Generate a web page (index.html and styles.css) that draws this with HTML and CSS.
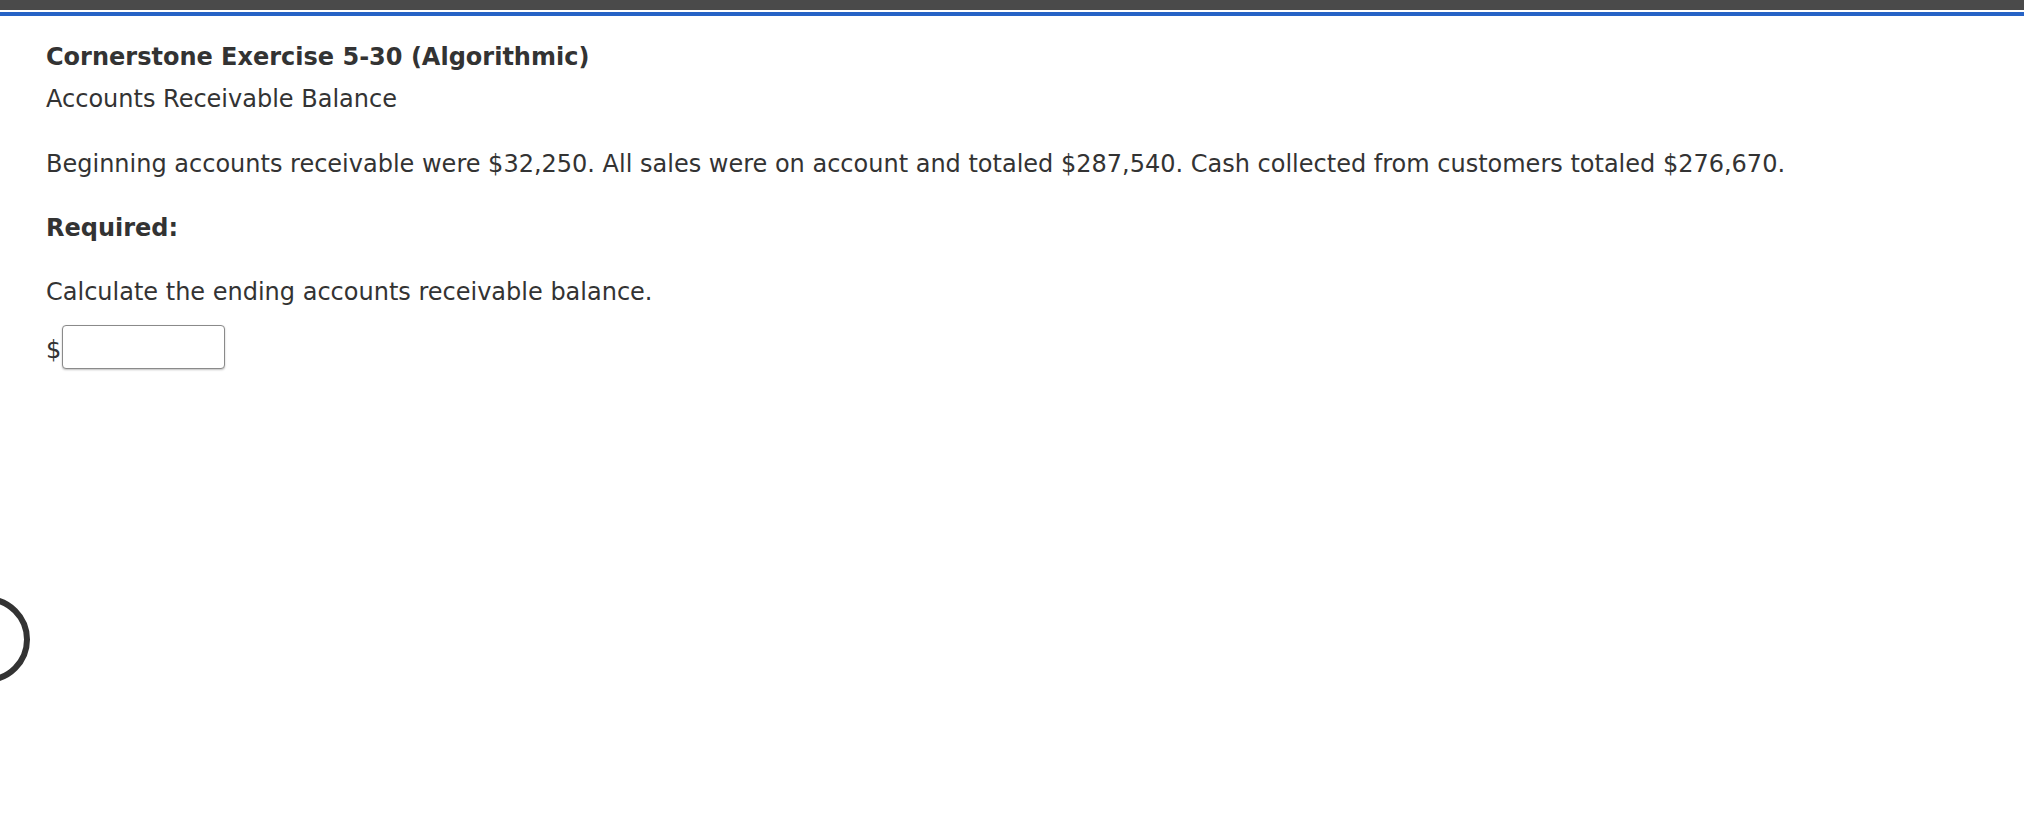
FILE: index.html
```html
<!DOCTYPE html>
<html lang="en">
<head>
<meta charset="utf-8">
<title>Cornerstone Exercise 5-30 (Algorithmic)</title>
<link rel="stylesheet" href="styles.css">
</head>
<body>
<header class="topbar">
  <div class="topbar-dark"></div>
  <div class="topbar-blue"></div>
</header>
<main class="content">
  <h1 class="title">Cornerstone Exercise 5-30 (Algorithmic)</h1>
  <p class="subtitle">Accounts Receivable Balance</p>
  <p class="intro">Beginning accounts receivable were $32,250. All sales were on account and totaled $287,540. Cash collected from customers totaled $276,670.</p>
  <p class="required">Required:</p>
  <p class="question">Calculate the ending accounts receivable balance.</p>
  <div class="answer-row">
    <span class="currency">$</span>
    <input class="answer-input" type="text" aria-label="Ending accounts receivable balance">
  </div>
</main>
<div class="ring"></div>
</body>
</html>
```
FILE: styles.css
```css
html, body {
  margin: 0;
  padding: 0;
  background: #ffffff;
}

body {
  font-family: "DejaVu Sans", Verdana, sans-serif;
  color: #333333;
  font-size: 24px;
  line-height: 32px;
  position: relative;
  min-height: 826px;
  overflow: hidden;
}

.topbar-dark {
  height: 10px;
  background: #4a4a4a;
}

.topbar-blue {
  height: 4px;
  margin-top: 2px;
  background: #2663c6;
}

.content {
  padding: 25px 0 0 46px;
}

.title {
  margin: 0;
  font-size: 24px;
  font-weight: bold;
  line-height: 32px;
}

.subtitle {
  margin: 10px 0 0 0;
}

.intro {
  margin: 33px 0 0 0;
}

.required {
  margin: 32px 0 0 0;
  font-weight: bold;
}

.question {
  margin: 32px 0 0 0;
}

.answer-row {
  display: flex;
  align-items: flex-end;
  margin-top: 17px;
}

.currency {
  margin-bottom: 3px;
  line-height: 32px;
}

.answer-input {
  box-sizing: border-box;
  width: 163px;
  height: 44px;
  margin: 0 0 0 1px;
  border: 1.5px solid #8a8a8a;
  border-radius: 4px;
  box-shadow: 0 1px 2px rgba(0, 0, 0, 0.25);
  background: #ffffff;
  font-family: inherit;
  font-size: 20px;
  padding: 0 6px;
}

.ring {
  position: absolute;
  left: -57px;
  top: 596px;
  width: 87px;
  height: 87px;
  box-sizing: border-box;
  border: 6px solid #333333;
  border-radius: 50%;
}
```
